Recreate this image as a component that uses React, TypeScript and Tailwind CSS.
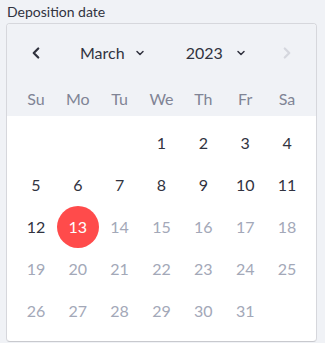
import { ChevronLeft, ChevronRight, ChevronDown } from "lucide-react";

const weekdays = ["Su", "Mo", "Tu", "We", "Th", "Fr", "Sa"];

// March 2023 starts on a Wednesday
const days: (number | null)[] = [null, null, null, ...Array.from({ length: 31 }, (_, i) => i + 1)];
const selected = 13;

export default function App() {
    return (
        <div className="w-[325px] h-[343px] bg-[#f0f2f6] font-['Lato','Noto_Sans',sans-serif] text-[#31333f]">
            <div className="pl-[7px] pt-[3px] h-[23px] text-sm leading-[18px]">Deposition date</div>

            <div className="ml-[6px] w-[311px] border border-[#d6d7dc] border-b-[#c8c9ce] rounded bg-white overflow-hidden">
                <div className="bg-[#f0f2f6] px-2">
                    <div className="h-[58px] flex items-center">
                        <div className="w-[42px] flex justify-center">
                            <ChevronLeft className="w-[18px] h-[18px] text-[#31333f]" strokeWidth={3} />
                        </div>
                        <div className="flex-1 flex items-center">
                            <div className="ml-[23px] flex items-center gap-[9px] text-base">
                                <span>March</span>
                                <ChevronDown className="w-3 h-3" strokeWidth={3} />
                            </div>
                            <div className="ml-[40px] flex items-center gap-[12px] text-base">
                                <span>2023</span>
                                <ChevronDown className="w-3 h-3" strokeWidth={3} />
                            </div>
                        </div>
                        <div className="w-[42px] flex justify-center">
                            <ChevronRight className="w-[18px] h-[18px] text-[#d5d7de]" strokeWidth={3} />
                        </div>
                    </div>
                    <div className="grid grid-cols-7 h-[34px] items-center">
                        {weekdays.map(d => (
                            <div key={d} className="text-center text-base text-[#808495] leading-[22px]">{d}</div>
                        ))}
                    </div>
                </div>

                <div className="px-2 pt-[6px] pb-[9px] grid grid-cols-7">
                    {days.map((d, i) => (
                        <div key={i} className="h-[42px] flex items-center justify-center">
                            {d !== null && (
                                d === selected ? (
                                    <div className="w-[42px] h-[42px] rounded-full bg-[#ff4b4b] text-white flex items-center justify-center text-base">{d}</div>
                                ) : (
                                    <span className={`text-base ${d > selected ? "text-[#a3a8b8]" : "text-[#31333f]"}`}>{d}</span>
                                )
                            )}
                        </div>
                    ))}
                </div>
            </div>
        </div>
    );
}
